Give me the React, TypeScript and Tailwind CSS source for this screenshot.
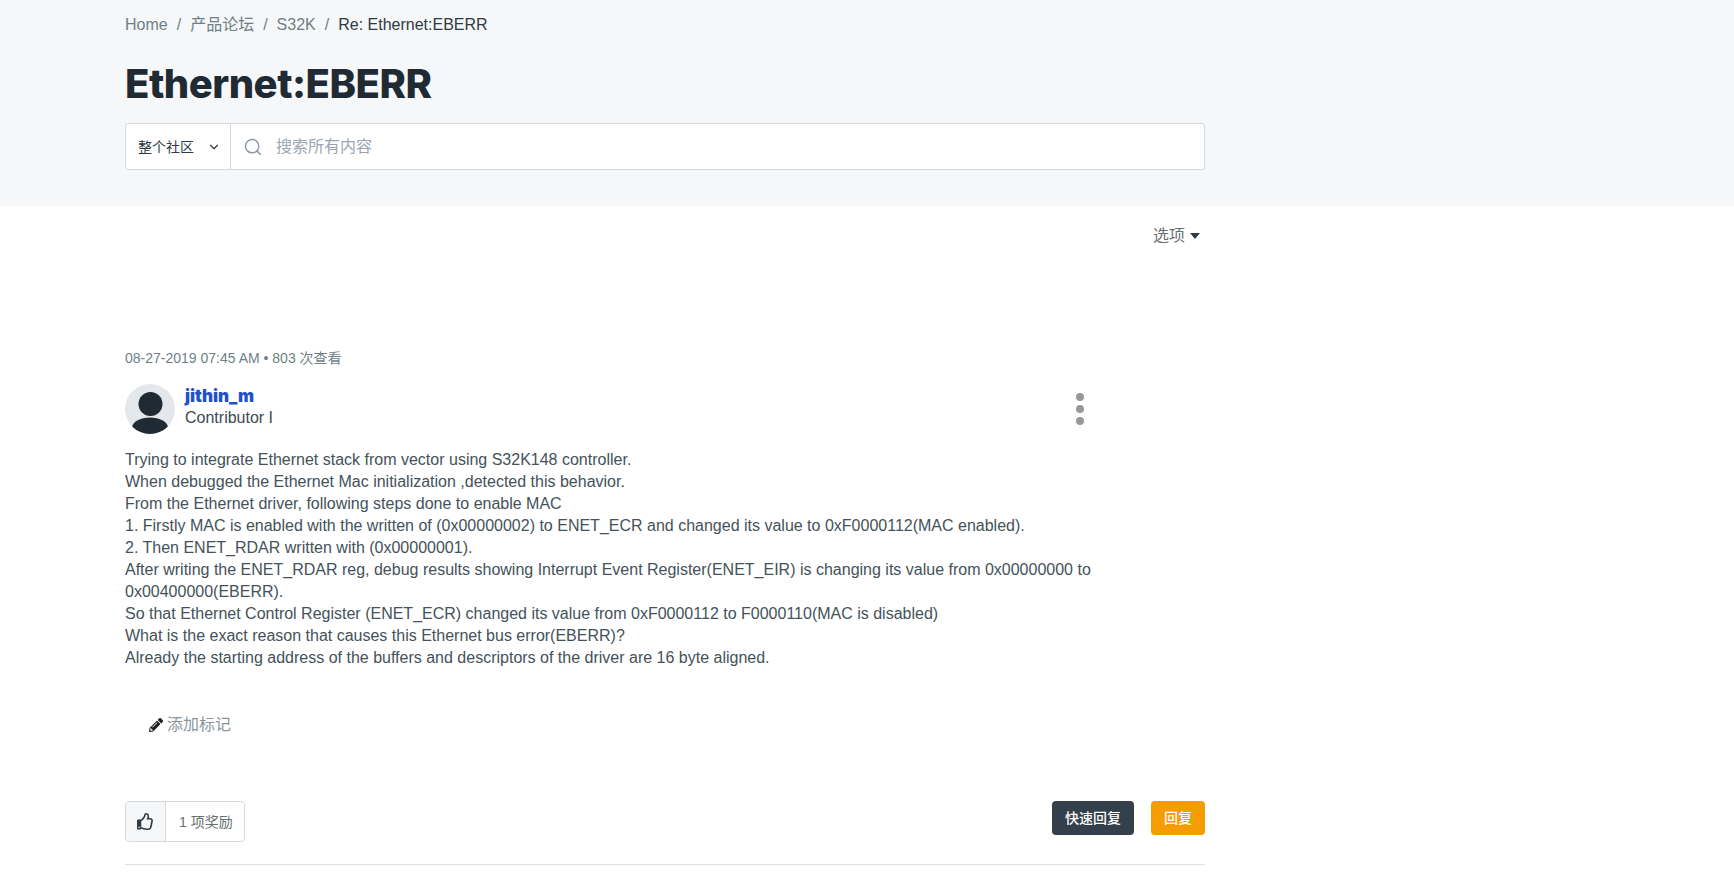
import React from "react";
import { ChevronDown, Search } from "lucide-react";
import { FaRegThumbsUp, FaPencilAlt } from "react-icons/fa";

const sans = "font-['Liberation_Sans','Noto_Sans_CJK_SC',sans-serif]";

const lines = [
  "Trying to integrate Ethernet stack from vector using S32K148 controller.",
  "When debugged the Ethernet Mac initialization ,detected this behavior.",
  "From the Ethernet driver, following steps done to enable MAC",
  "1. Firstly MAC is enabled with the written of (0x00000002) to ENET_ECR and changed its value to 0xF0000112(MAC enabled).",
  "2. Then ENET_RDAR written with (0x00000001).",
  "After writing the ENET_RDAR reg, debug results showing Interrupt Event Register(ENET_EIR) is changing its value from 0x00000000 to 0x00400000(EBERR).",
  "So that Ethernet Control Register (ENET_ECR) changed its value from 0xF0000112 to F0000110(MAC is disabled)",
  "What is the exact reason that causes this Ethernet bus error(EBERR)?",
  "Already the starting address of the buffers and descriptors of the driver are 16 byte aligned.",
];

function Crumb({ children }: { children: React.ReactNode }) {
  return <a className="text-[#6f7f85]">{children}</a>;
}
function Sep() {
  return <span className="px-[9px] text-[#6f7f85]">/</span>;
}

export default function App() {
  return (
    <div className={`${sans} h-[882px] overflow-hidden bg-white text-[#1f2a33]`}>
      <header className="h-[206px] bg-[#f5f7f9] pl-[125px] pt-[14px]">
        <nav className="flex h-[22px] items-center text-base">
          <Crumb>Home</Crumb>
          <Sep />
          <Crumb>产品论坛</Crumb>
          <Sep />
          <Crumb>S32K</Crumb>
          <Sep />
          <span className="text-[#2f3a44]">Re: Ethernet:EBERR</span>
        </nav>
        <h1 className="mt-[24px] h-[48px] font-['Inter',sans-serif] text-[40px] leading-[48px] font-extrabold tracking-[-0.5px] text-[#1f2a33]">
          Ethernet:EBERR
        </h1>
        <div className="mt-[15px] flex h-[47px] w-[1080px] rounded-[3px] border border-[#d5d9de] bg-white">
          <div className="flex w-[105px] items-center justify-between border-r border-[#d5d9de] pr-[9px] pl-[12px] text-sm text-[#2f3a44]">
            <span>整个社区</span>
            <ChevronDown size={14} strokeWidth={2} />
          </div>
          <div className="flex items-center pl-[12px] text-base text-[#9aa5b1]">
            <Search size={20} strokeWidth={1.75} className="text-[#8d9aa6]" />
            <span className="ml-[13px]">搜索所有内容</span>
          </div>
        </div>
      </header>

      <main className="w-[1205px] pl-[125px]">
        <div className="mt-[19px] flex h-[22px] items-center justify-end pr-[5px]">
          <span className="text-base text-[#66706f]">选项</span>
          <svg width="10" height="6" viewBox="0 0 10 6" className="ml-[5px]">
            <path d="M0 0h10L5 6z" fill="#2f3a44" />
          </svg>
        </div>

        <div className="mt-[102px] h-[18px] text-sm leading-[18px] text-[#6f7f85]">
          08-27-2019 07:45 AM • 803 次查看
        </div>

        <div className="mt-[17px] flex h-[50px] items-center">
          <svg width="50" height="50" viewBox="0 0 50 50" className="shrink-0">
            <defs>
              <clipPath id="avatar-clip">
                <circle cx="25" cy="25" r="25" />
              </clipPath>
            </defs>
            <circle cx="25" cy="25" r="25" fill="#e4e8ec" />
            <g clipPath="url(#avatar-clip)" fill="#1f2a33">
              <circle cx="25.5" cy="20" r="12" />
              <ellipse cx="25" cy="44" rx="18" ry="10.5" />
            </g>
          </svg>
          <div className="mb-[5px] ml-[10px] flex flex-col">
            <a className="font-['Inter',sans-serif] text-[17px] leading-[22px] font-black text-[#2150c8]">jithin_m</a>
            <span className="text-base leading-[22px] text-[#3c4a52]">Contributor I</span>
          </div>
          <div className="mr-[121px] ml-auto flex flex-col gap-[4px]">
            <span className="h-[8px] w-[8px] rounded-full bg-[#97979c]" />
            <span className="h-[8px] w-[8px] rounded-full bg-[#97979c]" />
            <span className="h-[8px] w-[8px] rounded-full bg-[#97979c]" />
          </div>
        </div>

        <div className="mt-[15px] w-[975px] text-base leading-[22px] text-[#44525a]">
          {lines.map((l) => (
            <div key={l}>{l}</div>
          ))}
        </div>

        <div className="mt-[45px] flex h-[22px] items-center pl-[24px]">
          <FaPencilAlt size={14} className="text-[#1f1f1f]" />
          <span className="ml-[4px] text-base text-[#8b969c]">添加标记</span>
        </div>

        <div className="mt-[65px] flex items-start justify-between">
          <div className="flex h-[41px] w-[120px] overflow-hidden rounded-[4px] border border-[#d5d9de]">
            <div className="flex w-[40px] items-center justify-center border-r border-[#d5d9de] bg-[#f5f7f9]">
              <FaRegThumbsUp size={17} className="text-[#2f3a44]" />
            </div>
            <div className="flex items-center pl-[13px] text-sm text-[#66706f]">1 项奖励</div>
          </div>
          <div className="flex gap-[17px]">
            <button className="flex h-[34px] w-[82px] items-center justify-center rounded-[4px] bg-[#33404c] text-sm font-medium text-white">
              快速回复
            </button>
            <button className="flex h-[34px] w-[54px] items-center justify-center rounded-[4px] bg-[#f59c00] text-sm font-medium text-white">
              回复
            </button>
          </div>
        </div>

        <div className="mt-[22px] h-px bg-[#dcdfe2]" />
      </main>
    </div>
  );
}
